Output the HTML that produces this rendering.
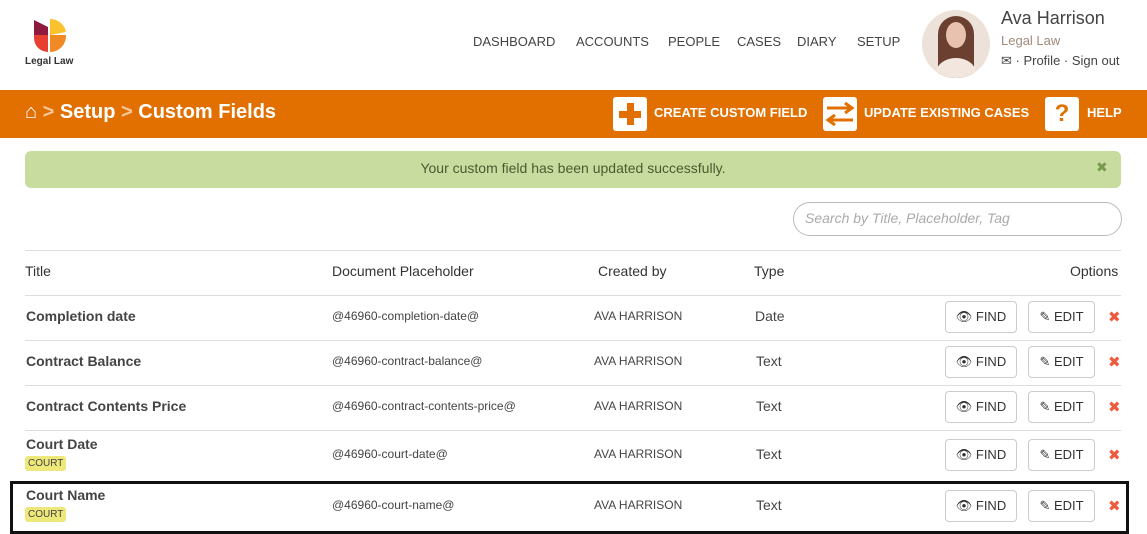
<!DOCTYPE html>
<html><head><style>
*{box-sizing:border-box;margin:0;padding:0}
body{width:1147px;height:534px;overflow:hidden;background:#fff;font-family:"Liberation Sans","DejaVu Sans",sans-serif;color:#444;position:relative}
.a{position:absolute}
.nav{top:34px;font-size:13px;color:#444}
.bar{top:90px;left:0;width:1147px;height:48px;background:#e17000}
.wb{color:#fff;font-weight:bold}
.ib{width:34px;height:34px;background:#fff;border-radius:3px;top:7px}
.btn{height:32px;border:1px solid #ccc;border-radius:4px;background:#fff;font-size:13px;color:#333;display:flex;align-items:center;justify-content:center;gap:6px}
.t{font-size:14px;font-weight:bold;color:#444}
.s{font-size:12px;color:#444}
.line{left:25px;width:1096px;height:1px;background:#ddd}
.tag{background:#eee77a;font-size:10px;padding:2px 3px;border-radius:3px;color:#444}
.x{color:#f05a3c;font-weight:bold;font-size:15px}
</style></head><body>
<svg class="a" style="left:32px;top:18px" width="36" height="36" viewBox="0 0 36 36">
<path d="M2 2 L16 9 L16 17 L2 17Z" fill="#8e1a3e"/>
<path d="M2 17 L16 17 L16 34 A14 14 0 0 1 2 20Z" fill="#e84030"/>
<path d="M18 1 A16 16 0 0 1 34 14 L18 17Z" fill="#f9c22e"/>
<path d="M18 17 L34 17 A16 16 0 0 1 18 34Z" fill="#f08a24"/>
</svg>
<div class="a" style="left:25px;top:56px;font-size:10px;color:#333;font-weight:bold">Legal Law</div>
<div class="a nav" style="left:473px">DASHBOARD</div>
<div class="a nav" style="left:576px">ACCOUNTS</div>
<div class="a nav" style="left:668px">PEOPLE</div>
<div class="a nav" style="left:737px">CASES</div>
<div class="a nav" style="left:797px">DIARY</div>
<div class="a nav" style="left:857px">SETUP</div>
<div class="a" style="left:922px;top:10px;width:68px;height:68px;border-radius:50%;overflow:hidden;background:#ece2da">
<div class="a" style="left:16px;top:6px;width:36px;height:66px;border-radius:18px 18px 4px 4px;background:#6b4030"></div>
<div class="a" style="left:24px;top:12px;width:20px;height:26px;border-radius:50%;background:#e8c2ae"></div>
<div class="a" style="left:14px;top:48px;width:40px;height:30px;border-radius:50% 50% 0 0;background:#f2e6de"></div>
</div>
<div class="a" style="left:1001px;top:8px;font-size:18px;color:#444">Ava Harrison</div>
<div class="a" style="left:1001px;top:33px;font-size:13px;color:#a08a7a">Legal Law</div>
<div class="a" style="left:1001px;top:53px;font-size:13px;color:#444">✉ · Profile · Sign out</div>
<div class="a bar"></div>
<div class="a wb" style="left:25px;top:101px;font-size:20px">⌂ <span style="color:#f5c89a">&gt;</span> Setup <span style="color:#f5c89a">&gt;</span> Custom Fields</div>
<div class="a ib" style="left:613px;top:97px"><div class="a" style="left:14px;top:6px;width:7px;height:22px;background:#e17000"></div><div class="a" style="left:6px;top:14px;width:22px;height:7px;background:#e17000"></div></div>
<div class="a wb" style="left:654px;top:105px;font-size:13px">CREATE CUSTOM FIELD</div>
<div class="a ib" style="left:823px;top:97px"><svg width="34" height="34"><path d="M4 11H28M22 6L29 11L22 16M30 23H6M12 18L5 23L12 28" stroke="#e17000" stroke-width="3" fill="none"/></svg></div>
<div class="a wb" style="left:864px;top:105px;font-size:13px">UPDATE EXISTING CASES</div>
<div class="a ib" style="left:1045px;top:97px;color:#e17000;font-weight:bold;font-size:24px;text-align:center;line-height:34px">?</div>
<div class="a wb" style="left:1087px;top:105px;font-size:13px">HELP</div>
<div class="a" style="left:25px;top:151px;width:1096px;height:37px;background:#c9dca0;border-radius:6px;font-size:14px;color:#4a5a30;text-align:center;line-height:34px">Your custom field has been updated successfully.</div>
<div class="a" style="left:1096px;top:159px;color:#7a9a50;font-weight:bold;font-size:14px">✖</div>
<div class="a" style="left:793px;top:202px;width:329px;height:34px;border:1px solid #bbb;border-radius:17px;font-size:14px;font-style:italic;color:#aaa;padding:7px 11px">Search by Title, Placeholder, Tag</div>
<div class="a line" style="top:250px"></div>
<div class="a t" style="left:25px;top:263px;font-weight:normal;color:#333">Title</div>
<div class="a t" style="left:332px;top:263px;font-weight:normal;color:#333">Document Placeholder</div>
<div class="a t" style="left:598px;top:263px;font-weight:normal;color:#333">Created by</div>
<div class="a t" style="left:754px;top:263px;font-weight:normal;color:#333">Type</div>
<div class="a t" style="left:1070px;top:263px;font-weight:normal;color:#333">Options</div>
<div class="a line" style="top:295px"></div>

<div class="a t" style="left:26px;top:308px">Completion date</div>
<div class="a s" style="left:332px;top:309px">@46960-completion-date@</div>
<div class="a s" style="left:594px;top:309px">AVA HARRISON</div>
<div class="a s" style="left:755px;top:308px;font-size:14px">Date</div>
<div class="a btn" style="left:945px;top:301px;width:72px">👁 FIND</div>
<div class="a btn" style="left:1028px;top:301px;width:67px">✎ EDIT</div>
<div class="a x" style="left:1108px;top:308px">✖</div>
<div class="a line" style="top:340px"></div>

<div class="a t" style="left:26px;top:353px">Contract Balance</div>
<div class="a s" style="left:332px;top:354px">@46960-contract-balance@</div>
<div class="a s" style="left:594px;top:354px">AVA HARRISON</div>
<div class="a s" style="left:756px;top:353px;font-size:14px">Text</div>
<div class="a btn" style="left:945px;top:346px;width:72px">👁 FIND</div>
<div class="a btn" style="left:1028px;top:346px;width:67px">✎ EDIT</div>
<div class="a x" style="left:1108px;top:353px">✖</div>
<div class="a line" style="top:385px"></div>

<div class="a t" style="left:26px;top:398px">Contract Contents Price</div>
<div class="a s" style="left:332px;top:399px">@46960-contract-contents-price@</div>
<div class="a s" style="left:594px;top:399px">AVA HARRISON</div>
<div class="a s" style="left:756px;top:398px;font-size:14px">Text</div>
<div class="a btn" style="left:945px;top:391px;width:72px">👁 FIND</div>
<div class="a btn" style="left:1028px;top:391px;width:67px">✎ EDIT</div>
<div class="a x" style="left:1108px;top:398px">✖</div>
<div class="a line" style="top:430px"></div>

<div class="a t" style="left:26px;top:436px">Court Date</div>
<div class="a tag" style="left:25px;top:456px">COURT</div>
<div class="a s" style="left:332px;top:447px">@46960-court-date@</div>
<div class="a s" style="left:594px;top:447px">AVA HARRISON</div>
<div class="a s" style="left:756px;top:446px;font-size:14px">Text</div>
<div class="a btn" style="left:945px;top:439px;width:72px">👁 FIND</div>
<div class="a btn" style="left:1028px;top:439px;width:67px">✎ EDIT</div>
<div class="a x" style="left:1108px;top:446px">✖</div>

<div class="a" style="left:10px;top:481px;width:1119px;height:53px;border:3px solid #111"></div>
<div class="a t" style="left:26px;top:487px">Court Name</div>
<div class="a tag" style="left:25px;top:507px">COURT</div>
<div class="a s" style="left:332px;top:498px">@46960-court-name@</div>
<div class="a s" style="left:594px;top:498px">AVA HARRISON</div>
<div class="a s" style="left:756px;top:497px;font-size:14px">Text</div>
<div class="a btn" style="left:945px;top:490px;width:72px">👁 FIND</div>
<div class="a btn" style="left:1028px;top:490px;width:67px">✎ EDIT</div>
<div class="a x" style="left:1108px;top:497px">✖</div>
</body></html>
